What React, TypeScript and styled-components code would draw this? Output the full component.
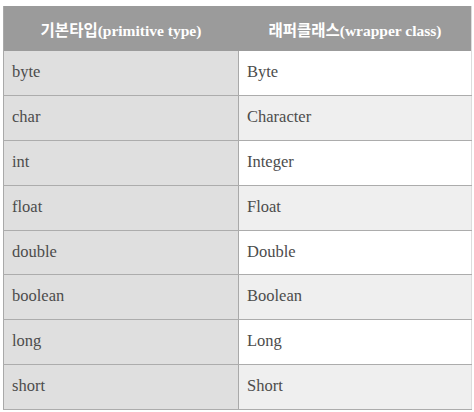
import styled, { createGlobalStyle } from "styled-components";

const GlobalStyle = createGlobalStyle`
  html, body {
    margin: 0;
    padding: 0;
    background: #ffffff;
  }
`;

const Page = styled.div`
  padding: 6px 2px 0 3px;
`;

const Table = styled.table`
  width: 469px;
  border-collapse: collapse;
  table-layout: fixed;
  font-family: "Liberation Serif", "Noto Sans CJK KR", serif;
  border-left: 1px solid #a9a9a9;
  border-right: 1px solid #dcdcdc;
`;

const HeadCell = styled.th`
  background: #9b9b9b;
  color: #ffffff;
  font-weight: 700;
  font-size: 15.5px;
  height: 45px;
  padding: 0;
  text-align: center;
  vertical-align: middle;
  box-sizing: border-box;
  &:first-child {
    border-right: 1px solid #9b9b9b;
  }
`;

const Cell = styled.td<{ $key?: boolean; $striped?: boolean }>`
  height: 44.8px;
  box-sizing: border-box;
  padding: 0 0 2px 8px;
  font-size: 16.5px;
  color: #4c4c4c;
  vertical-align: middle;
  border-bottom: 1px solid #acacac;
  background: ${(p) => (p.$key ? "#dfdfdf" : p.$striped ? "#efefef" : "#ffffff")};
  border-right: ${(p) => (p.$key ? "1px solid #a9a9a9" : "none")};
`;

const rows: [string, string][] = [
  ["byte", "Byte"],
  ["char", "Character"],
  ["int", "Integer"],
  ["float", "Float"],
  ["double", "Double"],
  ["boolean", "Boolean"],
  ["long", "Long"],
  ["short", "Short"],
];

export default function App() {
  return (
    <Page>
      <GlobalStyle />
      <Table>
        <colgroup>
          <col style={{ width: 235 }} />
          <col />
        </colgroup>
        <thead>
          <tr>
            <HeadCell>기본타입(primitive type)</HeadCell>
            <HeadCell>래퍼클래스(wrapper class)</HeadCell>
          </tr>
        </thead>
        <tbody>
          {rows.map(([prim, wrap], i) => (
            <tr key={prim}>
              <Cell $key>{prim}</Cell>
              <Cell $striped={i % 2 === 1}>{wrap}</Cell>
            </tr>
          ))}
        </tbody>
      </Table>
    </Page>
  );
}
